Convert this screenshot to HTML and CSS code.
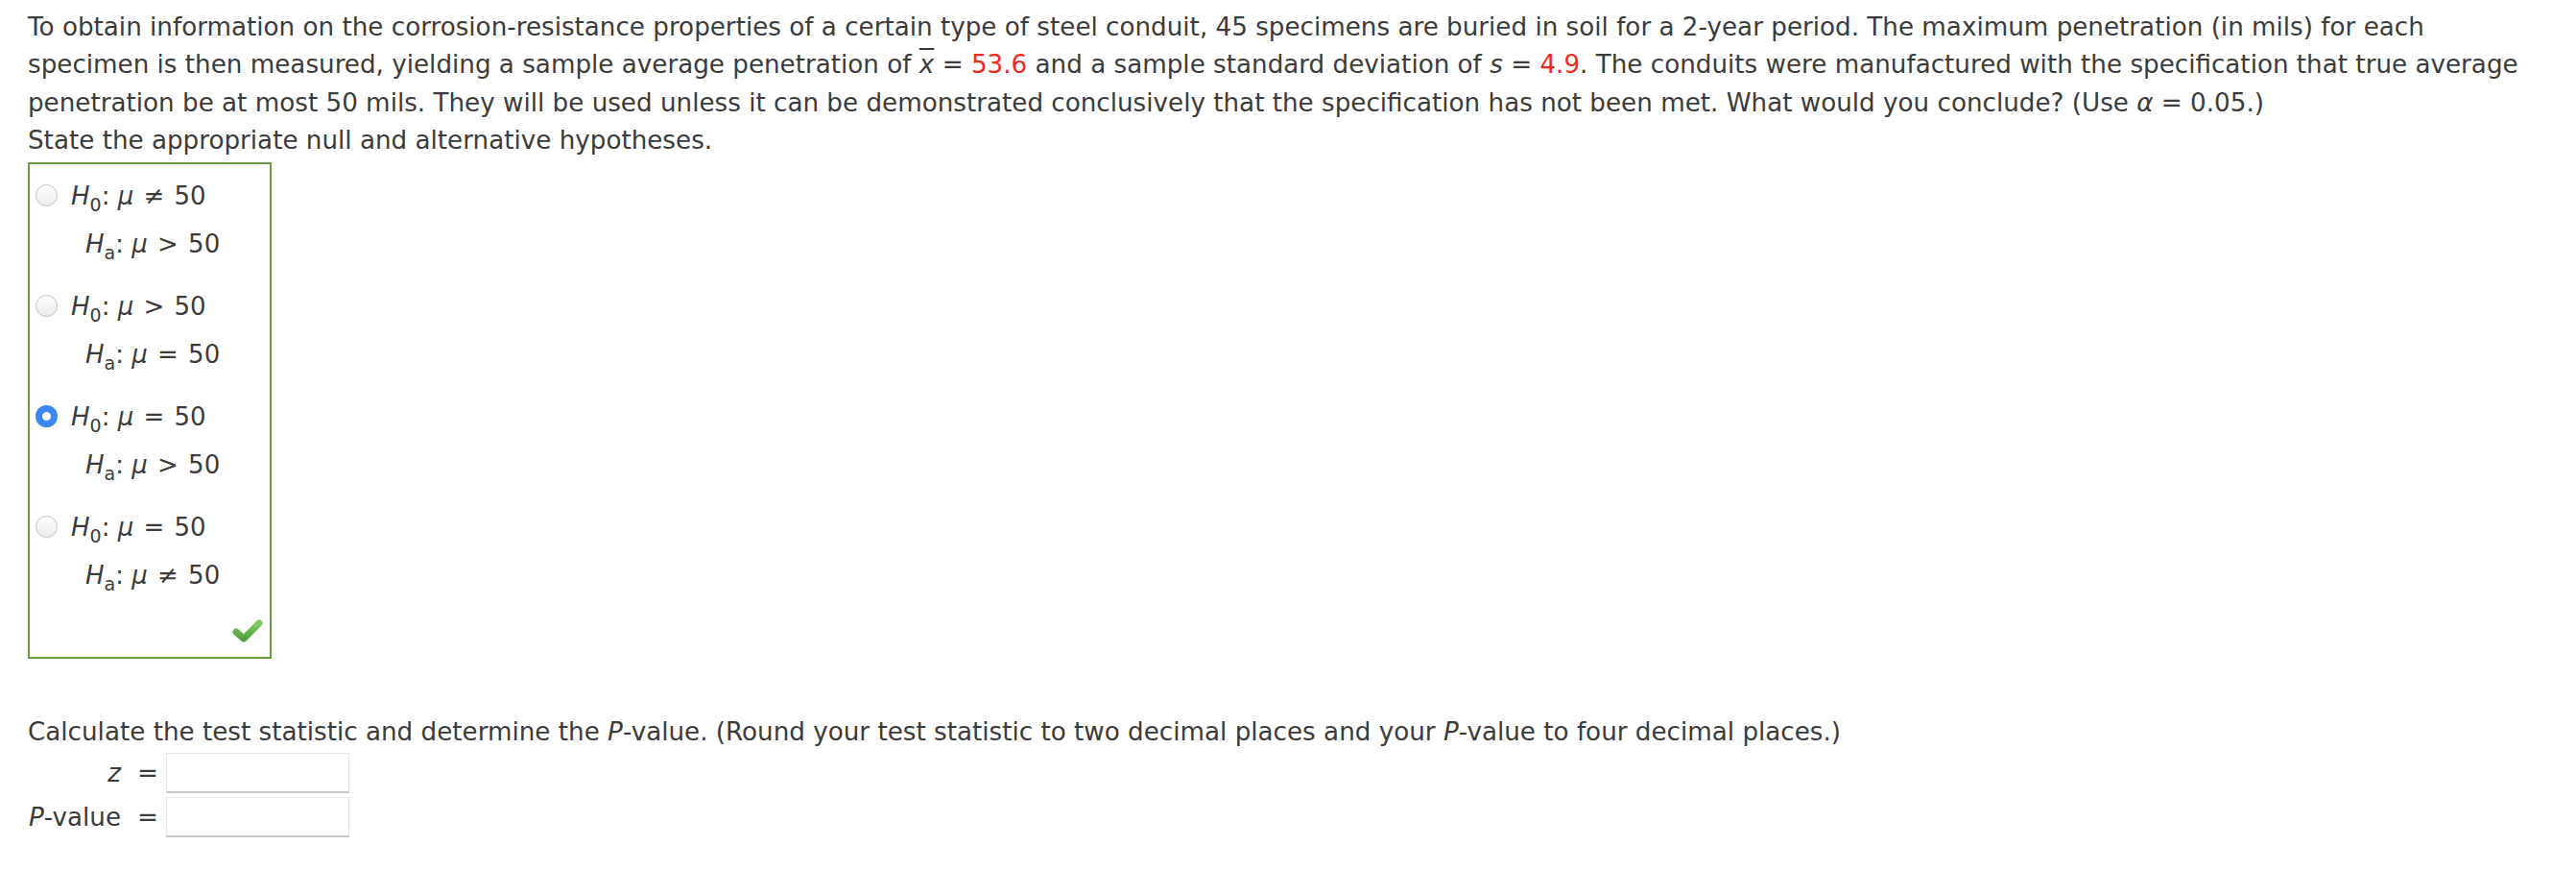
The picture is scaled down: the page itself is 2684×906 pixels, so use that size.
FILE: index.html
```html
<!DOCTYPE html>
<html lang="en">
<head>
  <meta charset="UTF-8" />
  <title>Hypothesis Test</title>
  <link rel="stylesheet" href="styles.css">
</head>
<body>

  <div class="question">
    <p class="prompt">
      To obtain information on the corrosion-resistance properties of a certain type of steel conduit, 45 specimens are buried in soil for a 2-year period. The maximum penetration (in mils) for each specimen is then measured, yielding a sample average penetration of <span class="xbar">x</span> = <span class="given">53.6</span> and a sample standard deviation of <i>s</i> = <span class="given">4.9</span>. The conduits were manufactured with the specification that true average penetration be at most 50 mils. They will be used unless it can be demonstrated conclusively that the specification has not been met. What would you conclude? (Use <i>&alpha;</i> = 0.05.)
      <br>State the appropriate null and alternative hypotheses.
    </p>

    <div class="choices">
      <div class="choice">
        <span class="radio"></span>
        <div class="hyp">
          <div class="h-line"><i>H</i><sub>0</sub>: <i>&mu;</i> <span class="op">&ne;</span> 50</div>
          <div class="h-line alt"><i>H</i><sub>a</sub>: <i>&mu;</i> <span class="op">&gt;</span> 50</div>
        </div>
      </div>
      <div class="choice">
        <span class="radio"></span>
        <div class="hyp">
          <div class="h-line"><i>H</i><sub>0</sub>: <i>&mu;</i> <span class="op">&gt;</span> 50</div>
          <div class="h-line alt"><i>H</i><sub>a</sub>: <i>&mu;</i> <span class="op">=</span> 50</div>
        </div>
      </div>
      <div class="choice">
        <span class="radio checked"></span>
        <div class="hyp">
          <div class="h-line"><i>H</i><sub>0</sub>: <i>&mu;</i> <span class="op">=</span> 50</div>
          <div class="h-line alt"><i>H</i><sub>a</sub>: <i>&mu;</i> <span class="op">&gt;</span> 50</div>
        </div>
      </div>
      <div class="choice">
        <span class="radio"></span>
        <div class="hyp">
          <div class="h-line"><i>H</i><sub>0</sub>: <i>&mu;</i> <span class="op">=</span> 50</div>
          <div class="h-line alt"><i>H</i><sub>a</sub>: <i>&mu;</i> <span class="op">&ne;</span> 50</div>
        </div>
      </div>
      <div class="mark">
        <svg width="34" height="26" viewBox="0 0 34 26">
          <defs>
            <linearGradient id="ck" x1="0" y1="0" x2="0" y2="1">
              <stop offset="0" stop-color="#86c96a"/>
              <stop offset="1" stop-color="#52a03c"/>
            </linearGradient>
          </defs>
          <path d="M5 14 L13 21 L29 5" fill="none" stroke="url(#ck)" stroke-width="7" stroke-linecap="round" stroke-linejoin="round"/>
        </svg>
      </div>
    </div>

    <p class="prompt calc">Calculate the test statistic and determine the <i>P</i>-value. (Round your test statistic to two decimal places and your <i>P</i>-value to four decimal places.)</p>

    <div class="answers">
      <div class="ans-label"><i>z</i></div>
      <div class="ans-eq">=</div>
      <input type="text" class="ans-input">
      <div class="ans-label"><i>P</i>-value</div>
      <div class="ans-eq">=</div>
      <input type="text" class="ans-input">
    </div>
  </div>

</body>
</html>
```

FILE: styles.css
```css
body {
  margin: 0;
  padding: 9px 29px;
  background-color: #fff;
  font-family: "DejaVu Sans", Verdana, sans-serif;
  font-size: 26.2px;
  color: #3b3b3b;
}
.prompt {
  margin: 0;
  max-width: 2600px;
  line-height: 39.4px;
}
.given {
  color: #ee2a1c;
}
.xbar {
  font-style: italic;
  text-decoration: overline;
}
.choices {
  display: inline-block;
  position: relative;
  width: 244px;
  border: 2px solid #6a9c40;
  margin-top: 2px;
  padding: 8px 0 45px 6px;
}
.choice {
  display: flex;
  align-items: flex-start;
  margin-bottom: 15px;
}
.radio {
  width: 21px;
  height: 21px;
  border: 1px solid #c4c4c4;
  border-radius: 50%;
  background: linear-gradient(#fdfdfd, #ececec);
  margin: 13px 14px 0 0;
  flex-shrink: 0;
}
.radio.checked {
  width: 23px;
  height: 23px;
  border: none;
  background: radial-gradient(circle, #fff 0 4px, #3a86f5 5px);
}
.hyp {
  font-size: 26px;
  line-height: 50px;
}
.h-line sub {
  font-size: 19px;
  vertical-align: -7px;
  line-height: 0;
}
.h-line .op {
  margin: 0 2px;
}
.h-line.alt {
  padding-left: 15px;
}
.mark {
  position: absolute;
  right: 6px;
  bottom: 14px;
  line-height: 0;
}
.calc {
  margin-top: 57px;
}
.answers {
  display: grid;
  grid-template-columns: 97px 47px 191px;
  row-gap: 4px;
  align-items: center;
  margin-top: 2px;
}
.ans-label {
  text-align: right;
}
.ans-eq {
  padding-left: 17px;
}
.ans-input {
  height: 42px;
  box-sizing: border-box;
  border: 1px solid #e6e6e6;
  border-bottom: 2px solid #c6c6c6;
  font-size: 20px;
}
```
